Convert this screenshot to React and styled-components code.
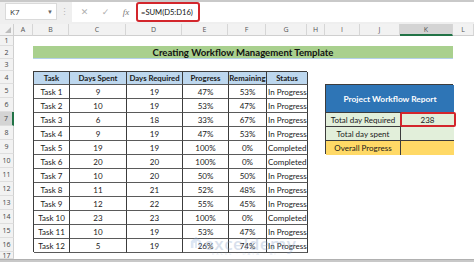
import styled, {createGlobalStyle} from "styled-components";

const GlobalStyle = createGlobalStyle`
	html, body {
		margin: 0;
		padding: 0;
		background: #fff;
	}
	body {
		width: 474px;
		height: 262px;
		overflow: hidden;
		font-family: Lato, "Liberation Sans", sans-serif;
	}
`

const COLS = ['A', 'B', 'C', 'D', 'E', 'F', 'G', 'H', 'I', 'J', 'K', 'L']

const tasks = [
	['Task 1', 9, 19, '47%', '53%', 'In Progress'],
	['Task 2', 10, 19, '53%', '47%', 'In Progress'],
	['Task 3', 6, 18, '33%', '67%', 'In Progress'],
	['Task 4', 9, 19, '47%', '53%', 'In Progress'],
	['Task 5', 19, 19, '100%', '0%', 'Completed'],
	['Task 6', 20, 20, '100%', '0%', 'Completed'],
	['Task 7', 10, 20, '50%', '50%', 'In Progress'],
	['Task 8', 11, 21, '52%', '48%', 'In Progress'],
	['Task 9', 12, 22, '55%', '45%', 'In Progress'],
	['Task 10', 23, 23, '100%', '0%', 'Completed'],
	['Task 11', 10, 19, '53%', '47%', 'In Progress'],
	['Task 12', 5, 19, '26%', '74%', 'In Progress'],
]

const Page = styled.div`
	width: 474px;
	height: 262px;
	display: flex;
	flex-direction: column;
	position: relative;
	overflow: hidden;
`

const FormulaBar = styled.div`
	height: 24px;
	box-sizing: border-box;
	border-top: 2px solid #c9c9c9;
	background: #efefef;
	display: flex;
	align-items: flex-start;
	padding-top: 1px;
	padding-left: 5px;
`

const NameBox = styled.div`
	width: 52px;
	height: 17px;
	box-sizing: border-box;
	background: #fff;
	border: 1px solid #dadada;
	display: flex;
	align-items: center;
	justify-content: space-between;
	padding: 0 3px 0 4px;
	font-family: "Open Sans", "Liberation Sans", sans-serif;
	font-size: 8px;
	color: #333;

	& span:last-child {
		font-size: 6px;
		color: #666;
	}
`

const Dots = styled.div`
	width: 15px;
	height: 17px;
	display: flex;
	align-items: center;
	justify-content: center;
	color: #b5b5b5;
	font-size: 9px;
`

const FormulaArea = styled.div`
	flex: 1;
	height: 20px;
	margin-top: -1px;
	background: #fff;
	display: flex;
	align-items: center;
`

const Tools = styled.div`
	width: 62px;
	display: flex;
	align-items: center;
	justify-content: space-around;
	padding-left: 2px;
	color: #b0b0b0;
	font-size: 9px;
	font-family: "DejaVu Sans", sans-serif;

	& i {
		font-family: "Liberation Serif", serif;
		color: #777;
		font-size: 9px;
	}
`

const FormulaText = styled.div`
	width: 64px;
	height: 20px;
	box-sizing: border-box;
	border: 2px solid #d3262c;
	border-radius: 3px;
	display: flex;
	align-items: center;
	padding-left: 3px;
	font-family: Lato, "Liberation Sans", sans-serif;
	font-size: 7.6px;
	color: #111;
	white-space: nowrap;
`

const Sheet = styled.div`
	display: grid;
	grid-template-columns: 14px 19px 36px 57px 56px 46px 38px 41px 18px 35px 40px 53px 1fr;
	grid-template-rows: 12px 10px 13px 12px 13px repeat(12, 14px) 7px;
	background: #fff;
`

const Corner = styled.div`
	grid-column: 1;
	grid-row: 1;
	background: #f2f2f2;
	border-right: 1px solid #cfcfcf;
	border-bottom: 1px solid #cfcfcf;
	box-sizing: border-box;
	position: relative;

	&::after {
		content: "";
		position: absolute;
		right: 2px;
		bottom: 2px;
		border-left: 6px solid transparent;
		border-bottom: 6px solid #bdbdbd;
	}
`

const ColHead = styled.div`
	grid-row: 1;
	grid-column: ${p => p.$col};
	box-sizing: border-box;
	background: ${p => p.$selected ? '#d4d4d4' : '#f2f2f2'};
	border-right: 1px solid #d6d6d6;
	border-bottom: ${p => p.$selected ? '2px solid #217346' : '1px solid #cfcfcf'};
	display: flex;
	align-items: center;
	justify-content: center;
	font-family: "Open Sans", "Liberation Sans", sans-serif;
	font-size: 7px;
	color: #555;
	overflow: hidden;
`

const RowHead = styled.div`
	grid-column: 1;
	grid-row: ${p => p.$row + 1};
	box-sizing: border-box;
	background: ${p => p.$selected ? '#d4d4d4' : '#f2f2f2'};
	border-right: ${p => p.$selected ? '2px solid #217346' : '1px solid #cfcfcf'};
	border-bottom: 1px solid #dedede;
	display: flex;
	align-items: center;
	justify-content: center;
	font-family: "Open Sans", "Liberation Sans", sans-serif;
	font-size: 7px;
	color: #444;
	overflow: hidden;
`

const TitleBar = styled.div`
	grid-column: 3 / 13;
	grid-row: 3;
	background: #a9d08e;
	border-bottom: 1px solid #b4d0ea;
	display: flex;
	align-items: center;
	justify-content: center;
	font-weight: 700;
	font-size: 9.6px;
	color: #111;
	white-space: nowrap;
`

const DataTable = styled.div`
	grid-column: 3 / 9;
	grid-row: 5 / 18;
	display: grid;
	grid-template-columns: 36px 57px 56px 46px 38px 41px;
	grid-template-rows: 13px repeat(12, 14px);
	box-sizing: border-box;
	border-left: 1px solid #3c3c3c;
	border-top: 1px solid #3c3c3c;
`

const Cell = styled.div`
	box-sizing: border-box;
	border-right: 1px solid #3c3c3c;
	border-bottom: 1px solid #5a5a5a;
	background: ${p => p.$head ? '#bdd7ee' : '#fff'};
	font-weight: ${p => p.$head ? 700 : 400};
	font-size: ${p => p.$head ? '7.8px' : '8px'};
	color: #1a1a1a;
	display: flex;
	align-items: center;
	justify-content: ${p => p.$left ? 'flex-start' : 'center'};
	padding-left: ${p => p.$left ? '1px' : '0'};
	white-space: nowrap;
	overflow: hidden;
`

const Report = styled.div`
	grid-column: 10 / 13;
	grid-row: 6 / 11;
	display: grid;
	grid-template-columns: 75px 53px;
	grid-template-rows: 28px repeat(3, 14px);
	box-sizing: border-box;
	border: 1px solid #3c3c3c;
	border-right-width: 2px;
`

const ReportHead = styled.div`
	grid-column: 1 / 3;
	background: #2e75b6;
	color: #fff;
	font-weight: 700;
	font-size: 8.4px;
	display: flex;
	align-items: center;
	justify-content: center;
	border-bottom: 1px solid #3c3c3c;
`

const ReportCell = styled.div`
	box-sizing: border-box;
	background: ${p => p.$tone === 'gold' ? '#ffd966' : '#e2efda'};
	border-bottom: ${p => p.$last ? 'none' : '1px solid #3c3c3c'};
	border-right: ${p => p.$label ? '1px solid #3c3c3c' : 'none'};
	font-size: 8px;
	color: #1a1a1a;
	display: flex;
	align-items: center;
	justify-content: center;
	position: relative;
	white-space: nowrap;
`

const Highlight = styled.div`
	position: absolute;
	left: -1px;
	right: -2px;
	top: -1px;
	bottom: -1px;
	border: 2px solid #d3262c;
	border-radius: 2px;
`

const BottomBar = styled.div`
	flex: 1;
	background: #c8c8c8;
	border-top: 1px solid #b0b0b0;
`

const Watermark = styled.div`
	position: absolute;
	left: 190px;
	top: 235px;
	display: flex;
	align-items: flex-start;
	gap: 2px;
	opacity: 0.3;
	pointer-events: none;
`

const WatermarkText = styled.div`
	display: flex;
	flex-direction: column;
	line-height: 1;
	color: #7f9cc4;

	& b {
		font-family: "Open Sans", "Liberation Sans", sans-serif;
		font-size: 17px;
		font-weight: 600;
		letter-spacing: 0.5px;
	}
	& small {
		font-family: "Open Sans", "Liberation Sans", sans-serif;
		font-size: 4px;
		letter-spacing: 2px;
		margin-left: 8px;
	}
`

export default function App() {
	return (
		<>
			<GlobalStyle />
			<Page>
				<FormulaBar>
					<NameBox><span>K7</span><span>▼</span></NameBox>
					<Dots>⋮</Dots>
					<FormulaArea>
						<Tools><span>✕</span><span>✓</span><i>fx</i></Tools>
						<FormulaText>=SUM(D5:D16)</FormulaText>
					</FormulaArea>
				</FormulaBar>
				<Sheet>
					<Corner />
					{COLS.map((c, i) => (
						<ColHead key={c} $col={i + 2} $selected={c === 'K'}>{c}</ColHead>
					))}
					{Array.from({length: 17}, (_, i) => (
						<RowHead key={i} $row={i + 1} $selected={i + 1 === 7}>{i + 1}</RowHead>
					))}
					<TitleBar>Creating Workflow Management Template</TitleBar>
					<DataTable>
						{['Task', 'Days Spent', 'Days Required', 'Progress', 'Remaining', 'Status'].map(h => (
							<Cell key={h} $head>{h}</Cell>
						))}
						{tasks.map(row => row.map((v, j) => (
							<Cell key={row[0] + j} $left={j === 5}>{v}</Cell>
						)))}
					</DataTable>
					<Report>
						<ReportHead>Project Workflow Report</ReportHead>
						<ReportCell $label>Total day Required</ReportCell>
						<ReportCell>238<Highlight /></ReportCell>
						<ReportCell $label>Total day spent</ReportCell>
						<ReportCell />
						<ReportCell $label $tone="gold" $last>Overall Progress</ReportCell>
						<ReportCell $tone="gold" $last />
					</Report>
				</Sheet>
				<BottomBar />
				<Watermark>
					<svg width="12" height="14" viewBox="0 0 14 16">
						<path d="M1 15 L1 7 L7 2 L13 7 L13 15 Z" fill="#8fb0dc" />
						<rect x="4" y="9" width="2" height="6" fill="#fff" />
						<rect x="8" y="7" width="2" height="8" fill="#fff" />
					</svg>
					<WatermarkText>
						<b>exceldemy</b>
						<small>EXCEL · DATA · BI</small>
					</WatermarkText>
				</Watermark>
			</Page>
		</>
	)
}
